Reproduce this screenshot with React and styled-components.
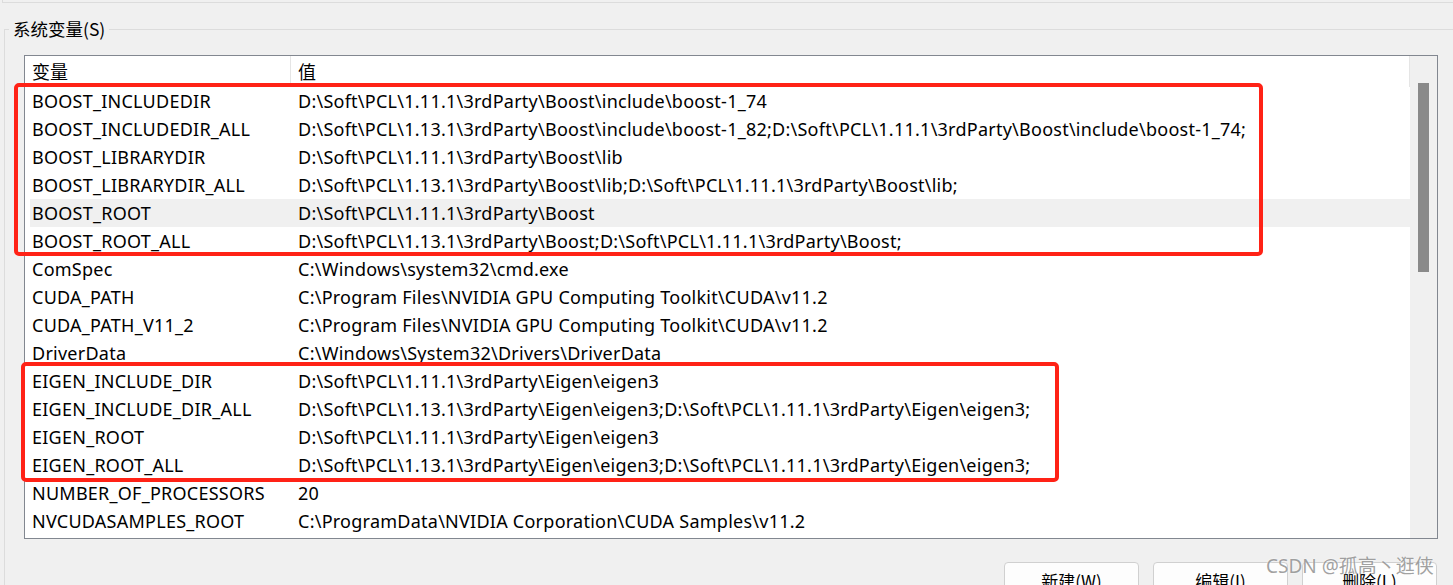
import React from "react";
import styled, { createGlobalStyle } from "styled-components";

const GlobalStyle = createGlobalStyle`
  html, body {
    margin: 0;
    padding: 0;
    background: #f0f0f0;
    overflow: hidden;
  }
  body {
    width: 1453px;
    height: 585px;
    font-family: "Noto Sans", "Noto Sans CJK SC", sans-serif;
    color: #000;
  }
`;

const Page = styled.div`
  position: relative;
  width: 1453px;
  height: 585px;
`;

const PrevGroup = styled.div`
  height: 2px;
  margin-left: 2px;
  border-left: 1px solid #dcdcdc;
  border-bottom: 1px solid #dcdcdc;
`;

const Group = styled.fieldset`
  margin: 14px 0 0 4px;
  padding: 0 15px 0 19px;
  border: 1px solid #dcdcdc;
  border-right: none;
  min-width: 0;
`;

const Legend = styled.legend`
  margin-left: -15px;
  padding: 0 4px;
  font-family: "Noto Sans CJK SC", sans-serif;
  font-size: 17.5px;
  line-height: 24px;
  color: #000;
`;

const ListBox = styled.div`
  position: relative;
  margin-top: 14px;
  width: 1412px;
  height: 482px;
  border: 1px solid #828790;
  background: #fff;
  display: flex;
`;

const Content = styled.div`
  flex: 1;
  display: flex;
  flex-direction: column;
  overflow: hidden;
`;

const Header = styled.div`
  display: flex;
  height: 31px;
  flex-shrink: 0;
  border-right: 1px solid #e5e5e5;
`;

const HeadCell = styled.div`
  width: ${(p) => (p.$first ? "266px" : "auto")};
  flex: ${(p) => (p.$first ? "none" : "1")};
  border-right: ${(p) => (p.$first ? "1px solid #e5e5e5" : "none")};
  padding-left: 7px;
  font-family: "Noto Sans CJK SC", sans-serif;
  font-size: 18px;
  line-height: 31px;
  box-sizing: border-box;
`;

const Row = styled.div`
  display: flex;
  height: 28px;
  flex-shrink: 0;
  margin-left: 5px;
  background: ${(p) => (p.$hover ? "#f0f0f0" : "transparent")};
  font-size: 18px;
  letter-spacing: 0.25px;
  line-height: 28px;
  white-space: nowrap;
`;

const NameCell = styled.div`
  width: 266px;
  flex: none;
  padding-left: 2px;
  box-sizing: border-box;
`;

const ValueCell = styled.div`
  flex: 1;
  padding-left: 2px;
`;

const ScrollTrack = styled.div`
  width: 27px;
  flex: none;
  background: #f0f0f0;
  display: flex;
  justify-content: center;
  padding-top: 27px;
  box-sizing: border-box;
`;

const Thumb = styled.div`
  width: 11px;
  height: 189px;
  background: #8a8a8a;
`;

const Mark = styled.div`
  position: absolute;
  box-sizing: border-box;
  border: 4px solid #ff2216;
  border-radius: 5px;
  pointer-events: none;
`;

const Buttons = styled.div`
  display: flex;
  justify-content: flex-end;
  gap: 14px;
  width: 1413px;
  margin-top: 23px;
`;

const Button = styled.div`
  width: 135px;
  height: 34px;
  box-sizing: border-box;
  background: #fdfdfd;
  border: 1px solid #d0d0d0;
  border-radius: 4px;
  text-align: center;
  font-family: "Noto Sans CJK SC", sans-serif;
  font-size: 17px;
  line-height: 34px;
  padding-top: 1px;
`;

const Watermark = styled.div`
  position: absolute;
  left: 1266px;
  top: 553px;
  font-family: "Noto Sans", "Noto Sans CJK SC", sans-serif;
  font-size: 19px;
  line-height: 26px;
  color: rgba(130, 130, 130, 0.75);
  text-shadow: 0 0 2px rgba(255, 255, 255, 0.9);
  white-space: nowrap;
`;

const rows = [
  ["BOOST_INCLUDEDIR", "D:\\Soft\\PCL\\1.11.1\\3rdParty\\Boost\\include\\boost-1_74"],
  ["BOOST_INCLUDEDIR_ALL", "D:\\Soft\\PCL\\1.13.1\\3rdParty\\Boost\\include\\boost-1_82;D:\\Soft\\PCL\\1.11.1\\3rdParty\\Boost\\include\\boost-1_74;"],
  ["BOOST_LIBRARYDIR", "D:\\Soft\\PCL\\1.11.1\\3rdParty\\Boost\\lib"],
  ["BOOST_LIBRARYDIR_ALL", "D:\\Soft\\PCL\\1.13.1\\3rdParty\\Boost\\lib;D:\\Soft\\PCL\\1.11.1\\3rdParty\\Boost\\lib;"],
  ["BOOST_ROOT", "D:\\Soft\\PCL\\1.11.1\\3rdParty\\Boost", true],
  ["BOOST_ROOT_ALL", "D:\\Soft\\PCL\\1.13.1\\3rdParty\\Boost;D:\\Soft\\PCL\\1.11.1\\3rdParty\\Boost;"],
  ["ComSpec", "C:\\Windows\\system32\\cmd.exe"],
  ["CUDA_PATH", "C:\\Program Files\\NVIDIA GPU Computing Toolkit\\CUDA\\v11.2"],
  ["CUDA_PATH_V11_2", "C:\\Program Files\\NVIDIA GPU Computing Toolkit\\CUDA\\v11.2"],
  ["DriverData", "C:\\Windows\\System32\\Drivers\\DriverData"],
  ["EIGEN_INCLUDE_DIR", "D:\\Soft\\PCL\\1.11.1\\3rdParty\\Eigen\\eigen3"],
  ["EIGEN_INCLUDE_DIR_ALL", "D:\\Soft\\PCL\\1.13.1\\3rdParty\\Eigen\\eigen3;D:\\Soft\\PCL\\1.11.1\\3rdParty\\Eigen\\eigen3;"],
  ["EIGEN_ROOT", "D:\\Soft\\PCL\\1.11.1\\3rdParty\\Eigen\\eigen3"],
  ["EIGEN_ROOT_ALL", "D:\\Soft\\PCL\\1.13.1\\3rdParty\\Eigen\\eigen3;D:\\Soft\\PCL\\1.11.1\\3rdParty\\Eigen\\eigen3;"],
  ["NUMBER_OF_PROCESSORS", "20"],
  ["NVCUDASAMPLES_ROOT", "C:\\ProgramData\\NVIDIA Corporation\\CUDA Samples\\v11.2"],
];

export default function App() {
  return (
    <Page>
      <GlobalStyle />
      <PrevGroup />
      <Group>
        <Legend>系统变量(S)</Legend>
        <ListBox>
          <Content>
            <Header>
              <HeadCell $first>变量</HeadCell>
              <HeadCell>值</HeadCell>
            </Header>
            {rows.map(([name, value, hover]) => (
              <Row key={name} $hover={hover}>
                <NameCell>{name}</NameCell>
                <ValueCell>{value}</ValueCell>
              </Row>
            ))}
          </Content>
          <ScrollTrack>
            <Thumb />
          </ScrollTrack>
          <Mark style={{ left: -11, top: 27, width: 1249, height: 173 }} />
          <Mark style={{ left: -4, top: 306, width: 1038, height: 120 }} />
        </ListBox>
        <Buttons>
          <Button>新建(W)</Button>
          <Button>编辑(I)</Button>
          <Button>删除(L)</Button>
        </Buttons>
      </Group>
      <Watermark>CSDN @孤高丶逛侠</Watermark>
    </Page>
  );
}
